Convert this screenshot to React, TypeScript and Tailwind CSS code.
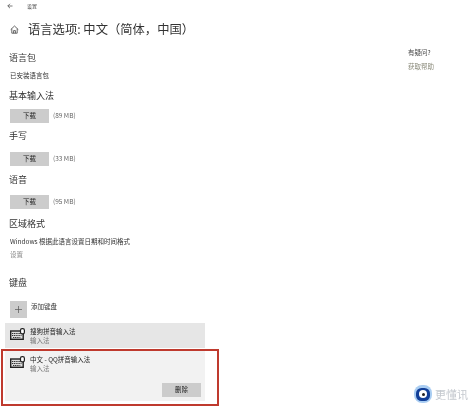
import React from 'react';

const font = { fontFamily: '"Noto Sans CJK SC", "Liberation Sans", sans-serif' };

function Heading({ children, className = '' }: { children: React.ReactNode; className?: string }) {
  return <div className={`text-[9px] leading-[12px] text-[#333] ${className}`}>{children}</div>;
}

function DownloadRow({ size, className = '' }: { size: string; className?: string }) {
  return (
    <div className={`flex items-center ${className}`}>
      <div className="w-[39px] h-[14px] bg-[#cccccc] flex items-center justify-center text-[6.5px] text-[#222]">下载</div>
      <span className="ml-[4px] text-[6.5px] text-[#666]">{size}</span>
    </div>
  );
}

function KeyboardIcon() {
  return (
    <svg width="15" height="12" viewBox="0 0 15 12" className="shrink-0">
      <rect x="0.7" y="3" width="12.5" height="8.3" fill="#ddd" stroke="#222" strokeWidth="1.4" />
      <path d="M2 5.5h9.5M2 7.5h9.5M3 9.5h7.5" stroke="#333" strokeWidth="1" strokeDasharray="1.2 0.6" />
      <rect x="10.5" y="0.6" width="3.9" height="5.2" rx="1.6" fill="#fff" stroke="#222" strokeWidth="1.2" />
    </svg>
  );
}

function ImeRow({ name }: { name: string }) {
  return (
    <div className="flex items-start pl-[5px] pt-[5px]">
      <KeyboardIcon />
      <div className="ml-[5px] -mt-[1px]">
        <div className="text-[6.5px] leading-[9px] text-[#222]">{name}</div>
        <div className="text-[6.5px] leading-[9px] text-[#777]">输入法</div>
      </div>
    </div>
  );
}

export default function App() {
  return (
    <div className="relative w-[474px] h-[407px] overflow-hidden bg-white blur-[0.3px]" style={font}>
      <div className="flex items-center h-[11px] pl-[7px]">
        <svg width="6" height="6" viewBox="0 0 6 6">
          <path d="M5.5 3H.8M3 .8.8 3 3 5.2" fill="none" stroke="#555" strokeWidth="0.8" />
        </svg>
        <span className="ml-[14px] text-[5px] text-[#444]">设置</span>
      </div>

      <div className="flex">
        <div className="w-[400px]">
          <div className="flex items-center h-[16px] mt-[10px] pl-[10px]">
            <svg width="9" height="9" viewBox="0 0 9 9">
              <path d="M.7 4.6 4.5 1l3.8 3.6M1.8 3.8v4.4h5.4V3.8M3.6 8.2V5.6h1.8v2.6" fill="none" stroke="#444" strokeWidth="0.8" />
            </svg>
            <span className="ml-[9px] text-[12.3px] leading-[16px] text-[#333] whitespace-nowrap">语言选项: 中文（简体，中国）</span>
          </div>

          <Heading className="mt-[15px] ml-[9px]">语言包</Heading>
          <div className="mt-[7px] ml-[10px] text-[6.5px] leading-[9px] text-[#333]">已安装语言包</div>
          <Heading className="mt-[10px] ml-[9px]">基本输入法</Heading>
          <DownloadRow size="(89 MB)" className="mt-[7px] ml-[10px]" />

          <Heading className="mt-[7px] ml-[9px]">手写</Heading>
          <DownloadRow size="(33 MB)" className="mt-[10px] ml-[10px]" />

          <Heading className="mt-[8px] ml-[9px]">语音</Heading>
          <DownloadRow size="(95 MB)" className="mt-[9px] ml-[10px]" />

          <Heading className="mt-[9px] ml-[9px]">区域格式</Heading>
          <div className="mt-[7px] ml-[10px] text-[6.5px] leading-[9px] text-[#333] whitespace-nowrap">Windows 根据此语言设置日期和时间格式</div>
          <div className="mt-[4px] ml-[10px] text-[6.5px] leading-[9px] text-[#888]">设置</div>

          <Heading className="mt-[18px] ml-[9px]">键盘</Heading>
          <div className="flex mt-[12px] ml-[10px]">
            <div className="w-[17px] h-[17px] bg-[#cccccc] flex items-center justify-center">
              <svg width="7" height="7" viewBox="0 0 7 7">
                <path d="M3.5 0v7M0 3.5h7" stroke="#555" strokeWidth="0.7" />
              </svg>
            </div>
            <span className="ml-[4px] text-[6.5px] leading-[9px] mt-[1px] text-[#333]">添加键盘</span>
          </div>

          <div className="ml-[5px] mt-[5px] w-[200px] h-[25px] bg-[#e6e6e6]">
            <ImeRow name="搜狗拼音输入法" />
          </div>

          <div className="ml-[1px] mt-[1px] w-[218px] h-[57px] border-2 border-[#bf3a2e] pl-[2px]">
            <div className="w-[200px] h-[50px] bg-[#f2f2f2] flex flex-col">
              <ImeRow name="中文 - QQ拼音输入法" />
              <div className="mt-auto mb-[4px] mr-[4px] self-end w-[39px] h-[14px] bg-[#cccccc] flex items-center justify-center text-[6.5px] text-[#222]">删除</div>
            </div>
          </div>
        </div>

        <div className="pl-[8px] pt-[37px]">
          <div className="text-[6.5px] leading-[9px] text-[#444]">有疑问?</div>
          <div className="mt-[5px] text-[6.5px] leading-[9px] text-[#8a8a7a]">获取帮助</div>
        </div>
      </div>

      {/* watermark */}
      <div className="absolute left-[414px] top-[385px] flex items-center">
        <div className="relative w-[18px] h-[18px] rounded-[45%] bg-[#a9cdf2] flex items-center justify-center">
          <div className="w-[14px] h-[13px] rounded-[40%] bg-[#123f98] flex items-center justify-center">
            <div className="w-[8px] h-[8px] rounded-full bg-white flex items-center justify-center">
              <div className="w-[3px] h-[3px] rounded-full bg-[#222]" />
            </div>
          </div>
        </div>
        <span className="ml-[3px] text-[11px] text-[#c5c9cf] whitespace-nowrap">更懂讯</span>
      </div>
    </div>
  );
}
